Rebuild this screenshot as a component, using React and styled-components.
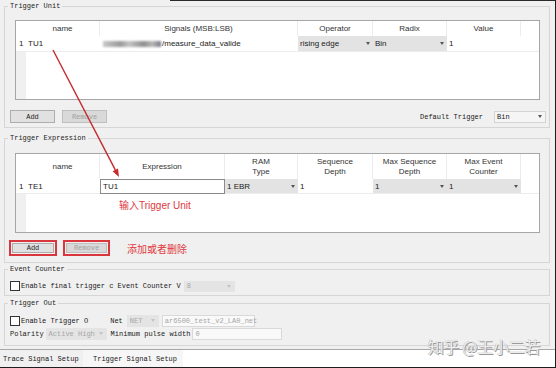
import React from 'react';
import styled, { createGlobalStyle } from 'styled-components';

const mono = `"Liberation Mono", "DejaVu Sans Mono", monospace`;
const sans = `"Liberation Sans", Arial, sans-serif`;
const cjk = `"Liberation Sans", "Noto Sans CJK SC", sans-serif`;

const Global = createGlobalStyle`
  html, body { margin: 0; padding: 0; background: #f0f0f0; }
  * { box-sizing: border-box; }
`;

const Window = styled.div`
  position: relative;
  width: 556px;
  height: 368px;
  background: #f0f0f0;
  border-right: 1px solid #1e1e1e;
  border-bottom: 1px solid #1e1e1e;
  display: flex;
  flex-direction: column;
  overflow: hidden;
  font-family: ${mono};
  font-size: 7px;
  color: #1a1a1a;
  &::before {
    content: '';
    position: absolute;
    top: 0;
    left: 170px;
    right: 0;
    height: 1px;
    background: #2a2a2a;
  }
`;

const Content = styled.div`
  padding: 1px 5px 0 4px;
  display: flex;
  flex-direction: column;
`;

const Group = styled.fieldset`
  margin: ${(p) => p.$mt || 0}px 0 0;
  padding: 0;
  min-width: 0;
  border: 1px solid #d6d6d6;
`;

const Legend = styled.legend`
  margin-left: 3px;
  padding: 0 2px;
  font-family: ${mono};
  font-size: 7px;
  line-height: 10px;
  color: #222;
`;

const Body = styled.div`
  padding: ${(p) => p.$pad};
  display: flex;
  flex-direction: column;
`;

const Table = styled.div`
  display: grid;
  grid-template-columns: 10px 74px ${(p) => p.$cols} 1fr;
  grid-template-rows: ${(p) => p.$rows};
  height: 80px;
  border: 1px solid #a6a6a6;
  background: #fff;
  font-family: ${sans};
  font-size: 8px;
  color: #222;
`;

const Head = styled.div`
  display: flex;
  align-items: center;
  justify-content: center;
  text-align: center;
  line-height: 10px;
  color: #333;
  border-right: ${(p) => (p.$plain ? 'none' : '1px solid #ececec')};
`;

const Cell = styled.div`
  display: flex;
  align-items: center;
  padding-left: ${(p) => p.$pl ?? 2}px;
  border-bottom: 1px solid #ececec;
  white-space: nowrap;
  overflow: hidden;
`;

const Combo = styled.div`
  display: flex;
  align-items: center;
  justify-content: space-between;
  padding: 0 3px 0 2px;
  background: #e3e3e3;
  border-bottom: 1px solid #ececec;
  white-space: nowrap;
`;

const Arrow = styled.span`
  width: 0;
  height: 0;
  border-left: 2px solid transparent;
  border-right: 2px solid transparent;
  border-top: 3px solid ${(p) => p.$c || '#555'};
`;

const TextInput = styled.div`
  display: flex;
  align-items: center;
  padding-left: 2px;
  background: #fff;
  border: 1px solid #8a8a8a;
`;

const Blur = styled.span`
  display: inline-block;
  width: 58px;
  height: 6px;
  margin-right: 1px;
  background: linear-gradient(90deg, #c8c8c8, #9a9a9a 30%, #c4c4c4 45%, #8f8f8f 70%, #b8b8b8 85%, #7a7a8a);
  filter: blur(0.8px);
`;

const RowNumFill = styled.div`
  background: #f0f0f0;
`;

const Fill = styled.div`
  grid-column: 2 / -1;
  padding: ${(p) => p.$pad || 0};
`;

const Note = styled.span`
  font-family: ${cjk};
  font-size: 10px;
  color: #e0393e;
  white-space: nowrap;
  margin-left: ${(p) => p.$ml || 0}px;
`;

const ButtonRow = styled.div`
  display: flex;
  align-items: center;
  margin-top: ${(p) => p.$mt}px;
  margin-right: ${(p) => p.$mr || 0}px;
  margin-left: ${(p) => p.$ml || 0}px;
  gap: ${(p) => p.$gap || 0}px;
`;

const Button = styled.div`
  width: ${(p) => p.$w || 45}px;
  height: ${(p) => p.$h || 13}px;
  display: flex;
  align-items: center;
  justify-content: center;
  background: ${(p) => (p.$disabled ? '#d9d9d9' : '#e1e1e1')};
  border: 1px solid ${(p) => (p.$disabled ? '#bfbfbf' : '#adadad')};
  color: ${(p) => (p.$disabled ? '#a0a0a0' : '#1a1a1a')};
  font-family: ${mono};
  font-size: 7px;
`;

const RedBox = styled.div`
  border: 2px solid #d9363e;
  padding: 1px;
  margin-left: ${(p) => p.$ml || 0}px;
`;

const Spacer = styled.div`
  flex: 1;
`;

const Label = styled.span`
  white-space: nowrap;
  margin-left: ${(p) => p.$ml || 0}px;
  color: #1a1a1a;
`;

const Select = styled.div`
  width: ${(p) => p.$w}px;
  height: ${(p) => p.$h || 12}px;
  margin-left: ${(p) => p.$ml || 0}px;
  display: flex;
  align-items: center;
  justify-content: space-between;
  padding: 0 3px 0 2px;
  background: ${(p) => (p.$disabled ? '#e4e4e4' : '#f5f5f5')};
  border: 1px solid ${(p) => (p.$disabled ? '#e4e4e4' : '#d4d4d4')};
  color: ${(p) => (p.$disabled ? '#a6a6a6' : '#1a1a1a')};
  font-family: ${mono};
  font-size: 7px;
  white-space: nowrap;
`;

const Field = styled.div`
  width: ${(p) => p.$w}px;
  height: 12px;
  margin-left: ${(p) => p.$ml || 0}px;
  display: flex;
  align-items: center;
  padding-left: 2px;
  background: #f9f9f9;
  border: 1px solid #d9d9d9;
  color: #a6a6a6;
  font-family: ${mono};
  font-size: 7px;
  white-space: nowrap;
`;

const FormRow = styled.div`
  display: flex;
  align-items: center;
  height: ${(p) => p.$h}px;
`;

const Check = styled.span`
  width: 10px;
  height: 10px;
  margin-right: 1px;
  background: #fff;
  border: 1px solid #333;
`;

const TabBar = styled.div`
  margin-top: auto;
  height: 18px;
  display: flex;
  border-top: 1px solid #a8a8a8;
  background: #fff;
`;

const Tab = styled.div`
  width: ${(p) => p.$w}px;
  display: flex;
  align-items: center;
  padding-left: ${(p) => p.$pl}px;
  background: ${(p) => p.$bg};
  font-family: ${mono};
  font-size: 7px;
  white-space: nowrap;
`;

const Watermark = styled.div`
  position: absolute;
  right: 15px;
  bottom: 9px;
  font-family: "Noto Sans CJK SC", sans-serif;
  font-size: 16px;
  letter-spacing: -0.3px;
  color: #ececec;
  text-shadow: 1px 1px 0 #9a9a9a, -0.5px -0.5px 0 #c0c0c0;
  white-space: nowrap;
`;

const Overlay = styled.svg`
  position: absolute;
  inset: 0;
  pointer-events: none;
`;

function ComboCell({ children }) {
  return (
    <Combo>
      <span>{children}</span>
      <Arrow />
    </Combo>
  );
}

export default function App() {
  return (
    <>
      <Global />
      <Window>
        <Content>
          <Group>
            <Legend>Trigger Unit</Legend>
            <Body $pad="9px 9px 4px 10px">
              <Table $cols="198px 75px 74px 74px" $rows="15px 16px 1fr">
                <Head $plain />
                <Head>name</Head>
                <Head>Signals (MSB:LSB)</Head>
                <Head>Operator</Head>
                <Head>Radix</Head>
                <Head>Value</Head>
                <Head $plain />
                <Cell $pl={3}>1</Cell>
                <Cell>TU1</Cell>
                <Cell $pl={3}>
                  <Blur />
                  /measure_data_valide
                </Cell>
                <ComboCell>rising edge</ComboCell>
                <ComboCell>Bin</ComboCell>
                <Cell>1</Cell>
                <Cell />
                <RowNumFill />
                <Fill />
              </Table>
              <ButtonRow $mt={10} $mr={-6} $ml={-5} $gap={7}>
                <Button>Add</Button>
                <Button $disabled>Remove</Button>
                <Spacer />
                <Label>Default Trigger</Label>
                <Select $w={52} $ml={4}>
                  <span>Bin</span>
                  <Arrow />
                </Select>
              </ButtonRow>
            </Body>
          </Group>

          <Group $mt={5}>
            <Legend>Trigger Expression</Legend>
            <Body $pad="10px 9px 6px 10px">
              <Table $cols="125px 73px 75px 74px 74px" $rows="25px 15px 1fr">
                <Head $plain />
                <Head>name</Head>
                <Head>Expression</Head>
                <Head>RAM<br />Type</Head>
                <Head>Sequence<br />Depth</Head>
                <Head>Max Sequence<br />Depth</Head>
                <Head>Max Event<br />Counter</Head>
                <Head $plain />
                <Cell $pl={3}>1</Cell>
                <Cell>TE1</Cell>
                <TextInput>TU1</TextInput>
                <ComboCell>1 EBR</ComboCell>
                <Cell>1</Cell>
                <ComboCell>1</ComboCell>
                <ComboCell>1</ComboCell>
                <Cell />
                <RowNumFill />
                <Fill $pad="3px 0 0 93px">
                  <Note>输入Trigger Unit</Note>
                </Fill>
              </Table>
              <ButtonRow $mt={7} $ml={-6}>
                <RedBox>
                  <Button $w={42} $h={10}>Add</Button>
                </RedBox>
                <RedBox $ml={6}>
                  <Button $w={41} $h={10} $disabled>Remove</Button>
                </RedBox>
                <Note $ml={17}>添加或者删除</Note>
              </ButtonRow>
            </Body>
          </Group>

          <Group $mt={1}>
            <Legend>Event Counter</Legend>
            <Body $pad="6px 5px 3px 5px">
              <FormRow $h={12}>
                <Check />
                <Label>Enable final trigger c Event Counter V</Label>
                <Select $w={51} $h={11} $ml={3} $disabled>
                  <span>8</span>
                  <Arrow $c="#c4c4c4" />
                </Select>
              </FormRow>
            </Body>
          </Group>

          <Group $mt={2}>
            <Legend>Trigger Out</Legend>
            <Body $pad="6px 5px 5px 5px">
              <FormRow $h={13}>
                <Check />
                <Label>Enable Trigger O</Label>
                <Label $ml={22}>Net</Label>
                <Select $w={32} $ml={4} $disabled>
                  <span>NET</span>
                  <Arrow $c="#c4c4c4" />
                </Select>
                <Field $w={93} $ml={3}>ar6500_test_v2_LA0_net</Field>
              </FormRow>
              <FormRow $h={13}>
                <Label>Polarity</Label>
                <Select $w={61} $ml={2} $disabled>
                  <span>Active High</span>
                  <Arrow $c="#c4c4c4" />
                </Select>
                <Label $ml={4}>Minimum pulse width</Label>
                <Field $w={90} $ml={2}>0</Field>
              </FormRow>
            </Body>
          </Group>
        </Content>

        <TabBar>
          <Tab $w={83} $pl={3} $bg="#f0f0f0">Trace Signal Setup</Tab>
          <Tab $w={100} $pl={10} $bg="#f6f6f6">Trigger Signal Setup</Tab>
        </TabBar>

        <Watermark>知乎 @王小二若</Watermark>

        <Overlay width="556" height="368" viewBox="0 0 556 368">
          <line x1="53" y1="50" x2="115.3" y2="169.9" stroke="#c62a2f" strokeWidth="1.4" />
          <polygon points="119,177 112.6,171.3 118,168.5" fill="#c62a2f" />
        </Overlay>
      </Window>
    </>
  );
}
